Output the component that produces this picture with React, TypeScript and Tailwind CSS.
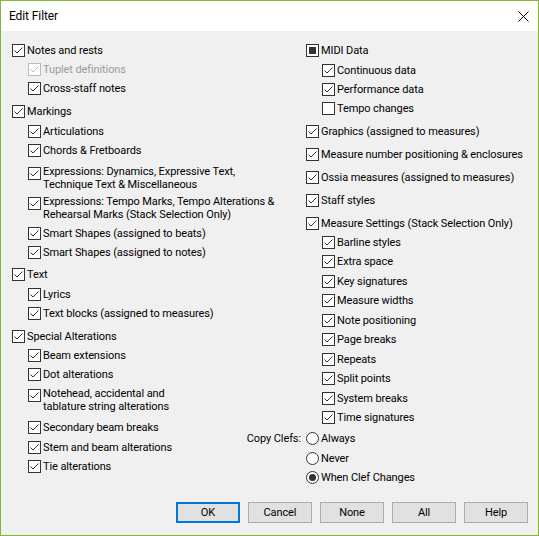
import React from 'react';

type State = 'on' | 'off' | 'mixed';

interface Item {
  lines: string[];
  mt: string;
  sub?: boolean;
  state: State;
  disabled?: boolean;
}

const leftItems: Item[] = [
  { lines: ['Notes and rests'], mt: 'mt-0', state: 'on' },
  { lines: ['Tuplet definitions'], mt: 'mt-[6px]', sub: true, state: 'on', disabled: true },
  { lines: ['Cross-staff notes'], mt: 'mt-[6px]', sub: true, state: 'on' },
  { lines: ['Markings'], mt: 'mt-[10px]', state: 'on' },
  { lines: ['Articulations'], mt: 'mt-[7px]', sub: true, state: 'on' },
  { lines: ['Chords & Fretboards'], mt: 'mt-[6px]', sub: true, state: 'on' },
  {
    lines: ['Expressions: Dynamics, Expressive Text,', 'Technique Text & Miscellaneous'],
    mt: 'mt-[10px]',
    sub: true,
    state: 'on',
  },
  {
    lines: ['Expressions: Tempo Marks, Tempo Alterations &', 'Rehearsal Marks (Stack Selection Only)'],
    mt: 'mt-[4px]',
    sub: true,
    state: 'on',
  },
  { lines: ['Smart Shapes (assigned to beats)'], mt: 'mt-[4px]', sub: true, state: 'on' },
  { lines: ['Smart Shapes (assigned to notes)'], mt: 'mt-[6px]', sub: true, state: 'on' },
  { lines: ['Text'], mt: 'mt-[9px]', state: 'on' },
  { lines: ['Lyrics'], mt: 'mt-[7px]', sub: true, state: 'on' },
  { lines: ['Text blocks (assigned to measures)'], mt: 'mt-[6px]', sub: true, state: 'on' },
  { lines: ['Special Alterations'], mt: 'mt-[10px]', state: 'on' },
  { lines: ['Beam extensions'], mt: 'mt-[6px]', sub: true, state: 'on' },
  { lines: ['Dot alterations'], mt: 'mt-[6px]', sub: true, state: 'on' },
  {
    lines: ['Notehead, accidental and', 'tablature string alterations'],
    mt: 'mt-[8px]',
    sub: true,
    state: 'on',
  },
  { lines: ['Secondary beam breaks'], mt: 'mt-[6px]', sub: true, state: 'on' },
  { lines: ['Stem and beam alterations'], mt: 'mt-[7px]', sub: true, state: 'on' },
  { lines: ['Tie alterations'], mt: 'mt-[6px]', sub: true, state: 'on' },
];

const rightItems: Item[] = [
  { lines: ['MIDI Data'], mt: 'mt-0', state: 'mixed' },
  { lines: ['Continuous data'], mt: 'mt-[7px]', sub: true, state: 'on' },
  { lines: ['Performance data'], mt: 'mt-[6px]', sub: true, state: 'on' },
  { lines: ['Tempo changes'], mt: 'mt-[6px]', sub: true, state: 'off' },
  { lines: ['Graphics (assigned to measures)'], mt: 'mt-[10px]', state: 'on' },
  { lines: ['Measure number positioning & enclosures'], mt: 'mt-[10px]', state: 'on' },
  { lines: ['Ossia measures (assigned to measures)'], mt: 'mt-[10px]', state: 'on' },
  { lines: ['Staff styles'], mt: 'mt-[10px]', state: 'on' },
  { lines: ['Measure Settings (Stack Selection Only)'], mt: 'mt-[10px]', state: 'on' },
  { lines: ['Barline styles'], mt: 'mt-[6px]', sub: true, state: 'on' },
  { lines: ['Extra space'], mt: 'mt-[6px]', sub: true, state: 'on' },
  { lines: ['Key signatures'], mt: 'mt-[7px]', sub: true, state: 'on' },
  { lines: ['Measure widths'], mt: 'mt-[6px]', sub: true, state: 'on' },
  { lines: ['Note positioning'], mt: 'mt-[7px]', sub: true, state: 'on' },
  { lines: ['Page breaks'], mt: 'mt-[6px]', sub: true, state: 'on' },
  { lines: ['Repeats'], mt: 'mt-[7px]', sub: true, state: 'on' },
  { lines: ['Split points'], mt: 'mt-[6px]', sub: true, state: 'on' },
  { lines: ['System breaks'], mt: 'mt-[7px]', sub: true, state: 'on' },
  { lines: ['Time signatures'], mt: 'mt-[6px]', sub: true, state: 'on' },
];

const clefOptions = [
  { label: 'Always', mt: 'mt-[8px]', selected: false },
  { label: 'Never', mt: 'mt-[7px]', selected: false },
  { label: 'When Clef Changes', mt: 'mt-[6px]', selected: true },
];

function CheckBox({ state, disabled }: { state: State; disabled?: boolean }) {
  const edge = disabled ? 'border-[#bcbcbc]' : 'border-[#333333]';
  const ink = disabled ? '#bcbcbc' : '#333333';
  return (
    <div className={`relative w-[13px] h-[13px] shrink-0 border bg-white ${edge}`}>
      {state === 'on' && (
        <svg width="13" height="13" viewBox="0 0 13 13" className="absolute -left-px -top-px">
          <path d="M2.5 6.5 L5 9 L10.5 3.5" fill="none" stroke={ink} strokeWidth="1" />
        </svg>
      )}
      {state === 'mixed' && <div className="absolute left-[2px] top-[2px] w-[7px] h-[7px] bg-[#333333]" />}
    </div>
  );
}

function CheckRow({ item }: { item: Item }) {
  const multi = item.lines.length > 1;
  return (
    <div className={`flex items-start ${item.mt} ${item.sub ? 'pl-[16px]' : ''}`}>
      <CheckBox state={item.state} disabled={item.disabled} />
      <div
        className={`ml-[2px] leading-[13px] whitespace-nowrap ${multi ? 'relative -top-[2px]' : ''} ${
          item.disabled ? 'text-[#9a9a9a]' : 'text-black'
        }`}
      >
        {item.lines.map((l) => (
          <div key={l}>{l}</div>
        ))}
      </div>
    </div>
  );
}

function Radio({ selected }: { selected: boolean }) {
  return (
    <div className="w-[13px] h-[13px] shrink-0 rounded-full border border-[#333333] bg-white flex items-center justify-center">
      {selected && <div className="w-[7px] h-[7px] rounded-full bg-[#333333]" />}
    </div>
  );
}

function Button({ label, primary }: { label: string; primary?: boolean }) {
  return (
    <button
      className={`w-[64px] h-[21px] bg-[#e1e1e1] text-black leading-none ${
        primary ? 'border-2 border-[#0078d7]' : 'border border-[#adadad]'
      }`}
    >
      {label}
    </button>
  );
}

export default function App() {
  return (
    <div
      className="w-[539px] h-[536px] flex flex-col border border-[#83b735] bg-[#f0f0f0] text-[11px] tracking-[-0.1px] text-black overflow-hidden"
      style={{ fontFamily: 'Roboto, "Liberation Sans", sans-serif' }}
    >
      {/* title bar */}
      <div className="h-[30px] shrink-0 bg-white flex items-center justify-between pl-[8px] pr-[9px]">
        <span className="text-[12px]">Edit Filter</span>
        <svg width="11" height="11" viewBox="0 0 11 11">
          <path d="M0.5 0.5 L10.5 10.5 M10.5 0.5 L0.5 10.5" stroke="#000" strokeWidth="1" />
        </svg>
      </div>

      <div className="flex-1 flex flex-col">
        <div className="flex-1 flex pt-[13px] pl-[11px]">
          <div className="w-[294px] shrink-0 flex flex-col">
            {leftItems.map((it) => (
              <CheckRow key={it.lines[0]} item={it} />
            ))}
          </div>
          <div className="flex flex-col">
            {rightItems.map((it) => (
              <CheckRow key={it.lines[0]} item={it} />
            ))}
            {clefOptions.map((opt, i) => (
              <div key={opt.label} className={`flex items-start ${opt.mt}`}>
                {i === 0 && (
                  <span className="-ml-[66px] w-[66px] pr-[5px] text-right leading-[13px] whitespace-nowrap">
                    Copy Clefs:
                  </span>
                )}
                <Radio selected={opt.selected} />
                <span className="ml-[2px] leading-[13px] whitespace-nowrap">{opt.label}</span>
              </div>
            ))}
          </div>
        </div>

        <div className="flex justify-end gap-[8px] pr-[10px] pb-[12px]">
          <Button label="OK" primary />
          <Button label="Cancel" />
          <Button label="None" />
          <Button label="All" />
          <Button label="Help" />
        </div>
      </div>
    </div>
  );
}
